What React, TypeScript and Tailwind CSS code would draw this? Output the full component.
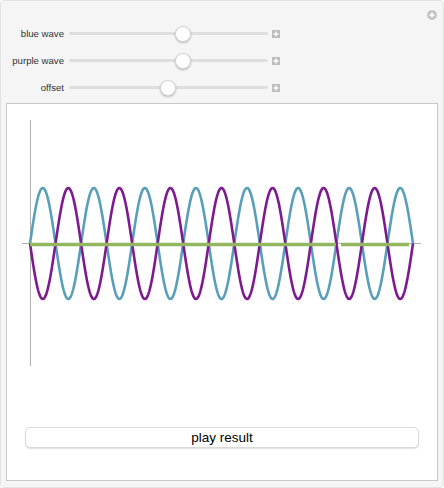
import React from "react";

const sliders = [
  { label: "blue wave", value: 0.573 },
  { label: "purple wave", value: 0.573 },
  { label: "offset", value: 0.497 },
];

// plot geometry, in svg coords
const x0 = 23;
const x1 = 406;
const cy = 139.5;
const amp = 55.5;
const period = (x1 - x0) / 7.5;

const wavePath = (sign: number) => {
  let d = "";
  for (let x = x0; x <= x1 + 0.01; x += 0.5) {
    const y = cy - sign * amp * Math.sin((2 * Math.PI * (x - x0)) / period);
    d += (d ? " L" : "M") + x.toFixed(2) + " " + y.toFixed(2);
  }
  return d;
};

const PlusBox = () => (
  <div className="w-[8px] h-[8px] bg-[#bdbdbd] flex items-center justify-center">
    <svg width="6" height="6" viewBox="0 0 6 6">
      <path d="M3 0.5 V5.5 M0.5 3 H5.5" stroke="#fff" strokeWidth="1.4" />
    </svg>
  </div>
);

const SliderRow = ({ label, value }: { label: string; value: number }) => (
  <div className="h-[27px] flex items-center">
    <div className="w-[63px] text-right text-[9.6px] text-[#333] leading-none">
      {label}
    </div>
    <div className="relative ml-[5px] w-[199px] h-[3px] bg-[#dedede] rounded-full">
      <div
        className="absolute top-1/2 w-[16px] h-[16px] -translate-x-1/2 -translate-y-1/2 rounded-full bg-white border border-[#d4d4d4] shadow-[0_1px_2px_rgba(0,0,0,0.25)]"
        style={{ left: `${value * 100}%` }}
      />
    </div>
    <div className="ml-[4px]">
      <PlusBox />
    </div>
  </div>
);

export default function App() {
  return (
    <div
      className="relative w-[444px] h-[488px] bg-[#f5f5f5] border border-[#e3e3e3] rounded-[4px] overflow-hidden"
      style={{ fontFamily: '"Liberation Sans", Arial, sans-serif' }}
    >
      <div className="absolute right-[6px] top-[9px] w-[10px] h-[10px] rounded-full bg-[#c4c4c4] flex items-center justify-center">
        <svg width="6" height="6" viewBox="0 0 6 6">
          <path d="M3 0.5 V5.5 M0.5 3 H5.5" stroke="#fff" strokeWidth="1.5" />
        </svg>
      </div>

      <div className="pt-[19px]">
        {sliders.map((s) => (
          <SliderRow key={s.label} label={s.label} value={s.value} />
        ))}
      </div>

      <div className="mt-[2px] ml-[5px] w-[432px] h-[378px] bg-white border border-[#c8c8c8] flex flex-col">
        <svg width="430" height="323" className="block">
          <line x1="23.5" y1="16" x2="23.5" y2="262" stroke="#b0b0b0" strokeWidth="1" />
          <line x1="15" y1="139.5" x2="414" y2="139.5" stroke="#b0b0b0" strokeWidth="1" />
          <path d={wavePath(1)} fill="none" stroke="#5a9fb9" strokeWidth="2.6" />
          <path d={wavePath(-1)} fill="none" stroke="#7e1a8f" strokeWidth="2.6" />
          <line x1="23" y1="140.5" x2="329" y2="140.5" stroke="#93b760" strokeWidth="3.5" />
          <line x1="334" y1="140.5" x2="402" y2="140.5" stroke="#93b760" strokeWidth="3.5" />
        </svg>
        <button className="mx-[18px] h-[21px] bg-white border border-[#d9d9d9] rounded-[5px] shadow-[0_1px_1px_rgba(0,0,0,0.12)] text-[13.5px] text-black leading-none flex items-center justify-center">
          play result
        </button>
      </div>
    </div>
  );
}
